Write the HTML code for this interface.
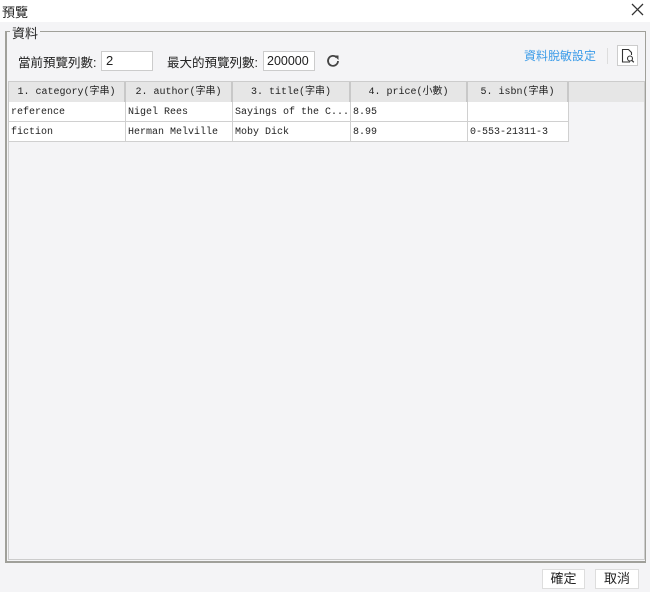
<!DOCTYPE html>
<html><head><meta charset="utf-8"><style>
*{margin:0;padding:0;box-sizing:border-box}
body{width:650px;height:592px;background:#f4f4f6;position:relative;overflow:hidden;font-family:"Liberation Sans","Noto Sans CJK TC",sans-serif;font-size:12px;color:#222}
.abs{position:absolute}
#title{left:0;top:0;width:650px;height:22px;background:#fff}
.fs{left:5px;top:31px;width:641px;height:532px;border:1px solid #a0a09a;border-left-width:2px;border-bottom-width:2px}
.grid{left:8px;top:81px;width:637px;height:479px;border:1px solid #ccc;background:#f4f4f6}
.inp{background:#fff;border:1px solid #ccc;height:20px;font-size:13px;padding-left:4px;line-height:18px}
.mono{font-family:"Liberation Mono","Noto Sans CJK TC",monospace;font-size:10px}
.hdr{top:82px;height:20px;background:#e6e6e6}
.hc{top:82px;height:20px;line-height:21px;text-align:center;border-right:2px solid #c8c8c8}
.c{height:20px;line-height:21px;background:#fff;border-right:1px solid #d0d0d0;border-bottom:1px solid #d0d0d0;padding-left:2px;white-space:nowrap;overflow:hidden}
.btn{background:#fff;border:1px solid #ddd;height:20px;line-height:18px;text-align:center;font-size:13px}
</style></head><body>
<div id="title" class="abs"></div>
<div class="abs" style="left:2px;top:2px;font-size:13px">預覽</div>
<svg class="abs" style="left:631px;top:3px" width="13" height="13"><path d="M1 1L12 12M12 1L1 12" stroke="#333" stroke-width="1.3"/></svg>
<div class="abs fs"></div>
<div class="abs" style="left:10px;top:23px;background:#f4f4f6;padding:0 2px;font-size:13px">資料</div>
<div class="abs" style="left:18px;top:52px;font-size:12.5px">當前預覽列數:</div>
<div class="abs inp" style="left:101px;top:51px;width:52px">2</div>
<div class="abs" style="left:167px;top:52px;font-size:12.5px">最大的預覽列數:</div>
<div class="abs inp" style="left:263px;top:51px;width:52px;padding-left:3px;font-size:12.5px">200000</div>
<svg class="abs" style="left:325px;top:53px" width="16" height="16" viewBox="0 0 16 16"><path d="M13 8A5 5 0 1 1 11.5 4.3" fill="none" stroke="#444" stroke-width="1.8"/><path d="M9 2.5L13.5 2.5L13.5 7Z" fill="#444"/></svg>
<div class="abs" style="left:524px;top:47px;color:#3a9be8;font-size:12px">資料脫敏設定</div>
<div class="abs" style="left:607px;top:48px;width:1px;height:16px;background:#ddd"></div>
<div class="abs" style="left:617px;top:45px;width:21px;height:21px;background:#fff;border:1px solid #ccc"></div>
<svg class="abs" style="left:621px;top:48px" width="14" height="16" viewBox="0 0 14 16"><path d="M9 14H1.5V1.5H7.5L10.5 4.5V7" fill="none" stroke="#333" stroke-width="1.1"/><circle cx="9" cy="10.5" r="2.5" fill="none" stroke="#333" stroke-width="1.1"/><path d="M10.8 12.3L12.8 14.3" stroke="#333" stroke-width="1.3"/></svg>
<div class="abs grid"></div>
<div class="abs hdr" style="left:9px;width:635px"></div>
<div class="abs hc mono" style="left:9px;width:117px">1. category(字串)</div>
<div class="abs hc mono" style="left:126px;width:107px">2. author(字串)</div>
<div class="abs hc mono" style="left:233px;width:118px">3. title(字串)</div>
<div class="abs hc mono" style="left:351px;width:117px">4. price(小數)</div>
<div class="abs hc mono" style="left:468px;width:101px">5. isbn(字串)</div>
<div class="abs" style="left:9px;top:102px">
<div style="display:flex" class="mono"><div class="c" style="width:117px">reference</div><div class="c" style="width:107px">Nigel Rees</div><div class="c" style="width:118px">Sayings of the C...</div><div class="c" style="width:117px">8.95</div><div class="c" style="width:101px"></div></div>
<div style="display:flex" class="mono"><div class="c" style="width:117px">fiction</div><div class="c" style="width:107px">Herman Melville</div><div class="c" style="width:118px">Moby Dick</div><div class="c" style="width:117px">8.99</div><div class="c" style="width:101px">0-553-21311-3</div></div>
</div>
<div class="abs btn" style="left:542px;top:569px;width:43px">確定</div>
<div class="abs btn" style="left:595px;top:569px;width:44px">取消</div>
</body></html>
